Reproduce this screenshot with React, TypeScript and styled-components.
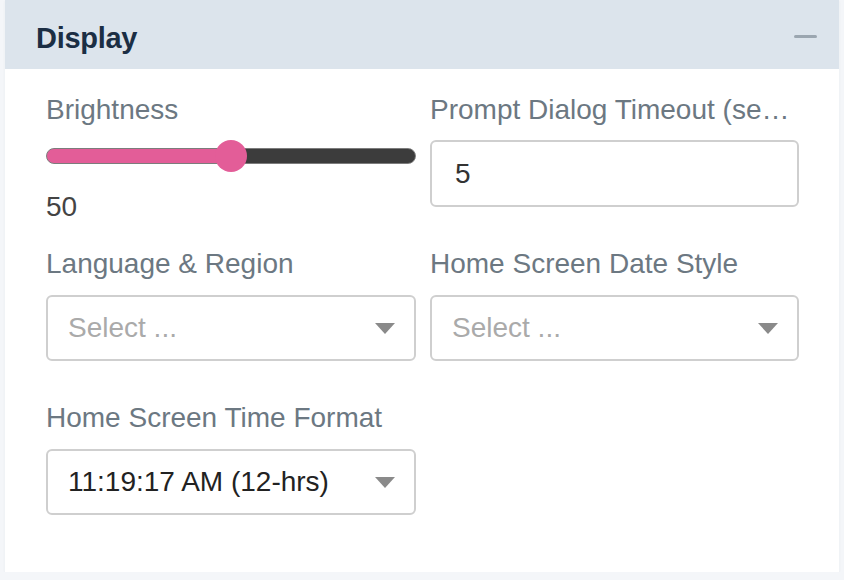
import React, { useState } from "react";
import styled, { createGlobalStyle } from "styled-components";

const GlobalStyle = createGlobalStyle`
  html, body {
    margin: 0;
    padding: 0;
    background: #f4f6f9;
    font-family: "Liberation Sans", Arial, sans-serif;
  }
  * { box-sizing: border-box; }
`;

function Caret() {
  return (
    <svg width="20" height="11" viewBox="0 0 20 11">
      <path d="M0 0 L20 0 L10 11 Z" fill="#8a8a8a" />
    </svg>
  );
}

function SelectField({ label, value }: { label: string; value?: string }) {
  return (
    <Field>
      <Label>{label}</Label>
      <SelectBox>
        <SelectText $placeholder={!value}>{value ?? "Select ..."}</SelectText>
        <Caret />
      </SelectBox>
    </Field>
  );
}

function App() {
  const [brightness, setBrightness] = useState(50);
  const [timeout, setTimeoutValue] = useState("5");

  return (
    <>
      <GlobalStyle />
      <Card>
        <Header>
          <Title>Display</Title>
          <Collapse aria-label="collapse" />
        </Header>
        <Body>
          <Field $bottom={25}>
            <Label>Brightness</Label>
            <Range
              type="range"
              min={0}
              max={100}
              value={brightness}
              $pct={brightness}
              onChange={(e) => setBrightness(Number(e.target.value))}
            />
            <RangeValue>{brightness}</RangeValue>
          </Field>
          <Field>
            <Label>Prompt Dialog Timeout (seconds)</Label>
            <TextInput value={timeout} onChange={(e) => setTimeoutValue(e.target.value)} />
          </Field>
          <SelectField label="Language & Region" />
          <SelectField label="Home Screen Date Style" />
          <SelectField label="Home Screen Time Format" value="11:19:17 AM (12-hrs)" />
        </Body>
      </Card>
    </>
  );
}

const Card = styled.section`
  margin: 0 5px;
  height: 572px;
  background: #fff;
  box-shadow: 0 1px 3px rgba(30, 50, 80, 0.05);
`;

const Header = styled.header`
  height: 69px;
  background: #dce4ec;
  display: flex;
  align-items: center;
  justify-content: space-between;
  padding: 0 22px 0 31px;
`;

const Title = styled.h2`
  margin: 6px 0 0;
  font-size: 29px;
  line-height: 32px;
  font-weight: bold;
  color: #1b2e44;
  letter-spacing: -0.3px;
`;

const Collapse = styled.span`
  display: block;
  width: 23px;
  height: 3px;
  border-radius: 2px;
  background: #9ba6b0;
  margin-top: 3px;
`;

const Body = styled.div`
  display: grid;
  grid-template-columns: 370px 369px;
  column-gap: 14px;
  align-items: start;
  padding: 25px 40px 0 41px;
`;

const Field = styled.div<{ $bottom?: number }>`
  display: flex;
  flex-direction: column;
  min-width: 0;
  padding-bottom: ${(p) => p.$bottom ?? 41}px;
`;

const Label = styled.label`
  font-size: 28px;
  line-height: 32px;
  color: #6c7882;
  white-space: nowrap;
  overflow: hidden;
  text-overflow: ellipsis;
`;

const Range = styled.input<{ $pct: number }>`
  -webkit-appearance: none;
  appearance: none;
  width: 100%;
  height: 32px;
  margin: 14px 0 0;
  background: transparent;

  &::-webkit-slider-runnable-track {
    height: 16px;
    border-radius: 8px;
    border: 1.5px solid #7c7c7c;
    background: linear-gradient(
      to right,
      #e35d98 ${(p) => p.$pct}%,
      #3c3c3c ${(p) => p.$pct}%
    );
  }

  &::-webkit-slider-thumb {
    -webkit-appearance: none;
    width: 32px;
    height: 32px;
    margin-top: -9.5px;
    border-radius: 50%;
    background: #e35d98;
    border: none;
  }

  &:focus { outline: none; }
`;

const RangeValue = styled.div`
  margin-top: 19px;
  font-size: 28px;
  line-height: 32px;
  color: #444;
`;

const TextInput = styled.input`
  margin-top: 14px;
  height: 67px;
  width: 100%;
  padding: 0 20px 0 23px;
  border: 2px solid #cfcfcf;
  border-radius: 6px;
  font-family: inherit;
  font-size: 28px;
  color: #333;
  outline: none;
`;

const SelectBox = styled.div`
  margin-top: 15px;
  height: 66px;
  display: flex;
  align-items: center;
  justify-content: space-between;
  padding: 0 19px 0 20px;
  border: 2px solid #cfcfcf;
  border-radius: 6px;
  background: #fff;
`;

const SelectText = styled.span<{ $placeholder: boolean }>`
  font-size: 28px;
  line-height: 32px;
  color: ${(p) => (p.$placeholder ? "#aaaaaa" : "#222")};
`;

export default App;
